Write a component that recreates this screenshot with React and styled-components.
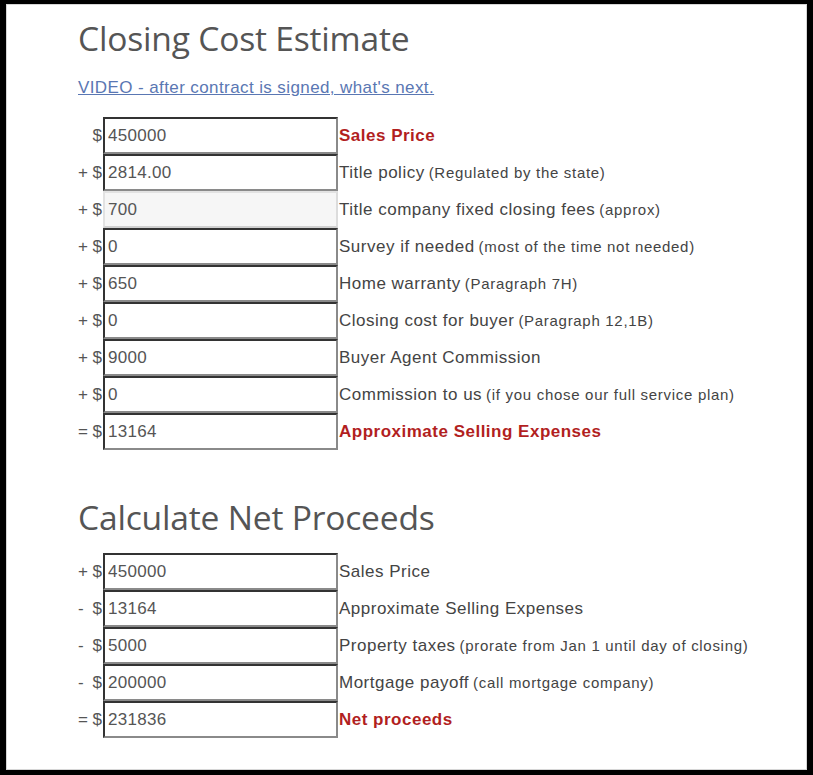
import React from 'react';
import styled, { createGlobalStyle } from 'styled-components';

const GlobalStyle = createGlobalStyle`
  html, body {
    margin: 0;
    padding: 0;
    background: #fff;
  }
  * {
    box-sizing: border-box;
  }
`;

const Frame = styled.div`
  width: 813px;
  height: 775px;
  border-style: solid;
  border-color: #000;
  border-width: 4px 6px 5px 6px;
  box-shadow: inset 0 0 0 1px #d6d6d6;
  padding: 14px 0 0 72px;
  font-family: "Liberation Sans", Arial, sans-serif;
  color: #555;
  overflow: hidden;
`;

const Heading = styled.h2`
  margin: 0;
  font-family: "Open Sans", sans-serif;
  font-weight: 400;
  font-size: 33.6px;
  line-height: 40px;
  color: #555;
  letter-spacing: -0.2px;
`;

const VideoLink = styled.a`
  display: block;
  margin-top: 20px;
  font-size: 17px;
  line-height: 20px;
  letter-spacing: 0.4px;
  color: #5a77b3;
  text-decoration: underline;
`;

const Calc = styled.div`
  display: grid;
  grid-template-columns: 24px 235px auto;
  grid-auto-rows: 37px;
  column-gap: 1px;
  margin-top: ${p => p.$top}px;
`;

const Sign = styled.div`
  display: flex;
  align-items: center;
  justify-content: ${p => (p.$op ? 'space-between' : 'flex-end')};
  font-size: 17px;
  color: #555;
`;

const Field = styled.input`
  width: 100%;
  height: 37px;
  margin: 0;
  padding: 0 0 0 3px;
  font-family: "Liberation Sans", Arial, sans-serif;
  font-size: 17px;
  letter-spacing: 0.3px;
  color: #555;
  background: ${p => (p.$locked ? '#f6f6f6' : '#fff')};
  border: 2px solid;
  border-color: ${p =>
    p.$locked ? '#e2e2e2 #dcdcdc #d0d0d0 #e2e2e2' : '#333 #8a8a8a #8a8a8a #333'};
  outline: none;
`;

const Label = styled.div`
  display: flex;
  align-items: center;
  font-size: 17px;
  letter-spacing: 0.5px;
  color: ${p => (p.$total ? '#b21f1f' : '#444')};
  font-weight: ${p => (p.$total ? 700 : 400)};
  white-space: nowrap;
`;

const Note = styled.span`
  font-size: 15px;
  letter-spacing: 0.7px;
  margin-left: 4px;
`;

const Spacer = styled.div`
  height: 47px;
`;

const estimateRows = [
  { op: '', value: '450000', label: 'Sales Price', total: true },
  { op: '+', value: '2814.00', label: 'Title policy', note: '(Regulated by the state)' },
  { op: '+', value: '700', label: 'Title company fixed closing fees', note: '(approx)', locked: true },
  { op: '+', value: '0', label: 'Survey if needed', note: '(most of the time not needed)' },
  { op: '+', value: '650', label: 'Home warranty', note: '(Paragraph 7H)' },
  { op: '+', value: '0', label: 'Closing cost for buyer', note: '(Paragraph 12,1B)' },
  { op: '+', value: '9000', label: 'Buyer Agent Commission' },
  { op: '+', value: '0', label: 'Commission to us', note: '(if you chose our full service plan)' },
  { op: '=', value: '13164', label: 'Approximate Selling Expenses', total: true },
];

const netRows = [
  { op: '+', value: '450000', label: 'Sales Price' },
  { op: '-', value: '13164', label: 'Approximate Selling Expenses' },
  { op: '-', value: '5000', label: 'Property taxes', note: '(prorate from Jan 1 until day of closing)' },
  { op: '-', value: '200000', label: 'Mortgage payoff', note: '(call mortgage company)' },
  { op: '=', value: '231836', label: 'Net proceeds', total: true },
];

const CalcRows = ({ rows, top }) => (
  <Calc $top={top}>
    {rows.map((row, i) => (
      <React.Fragment key={i}>
        <Sign $op={!!row.op}>
          {row.op && <span>{row.op}</span>}
          <span>$</span>
        </Sign>
        <Field type="text" value={row.value} readOnly $locked={row.locked} />
        <Label $total={row.total}>
          {row.label}
          {row.note && <Note>{row.note}</Note>}
        </Label>
      </React.Fragment>
    ))}
  </Calc>
);

const App = () => (
  <>
    <GlobalStyle />
    <Frame>
      <Heading>Closing Cost Estimate</Heading>
      <VideoLink href="#">VIDEO - after contract is signed, what's next.</VideoLink>
      <CalcRows rows={estimateRows} top={19} />
      <Spacer />
      <Heading>Calculate Net Proceeds</Heading>
      <CalcRows rows={netRows} top={16} />
    </Frame>
  </>
);

export default App;
